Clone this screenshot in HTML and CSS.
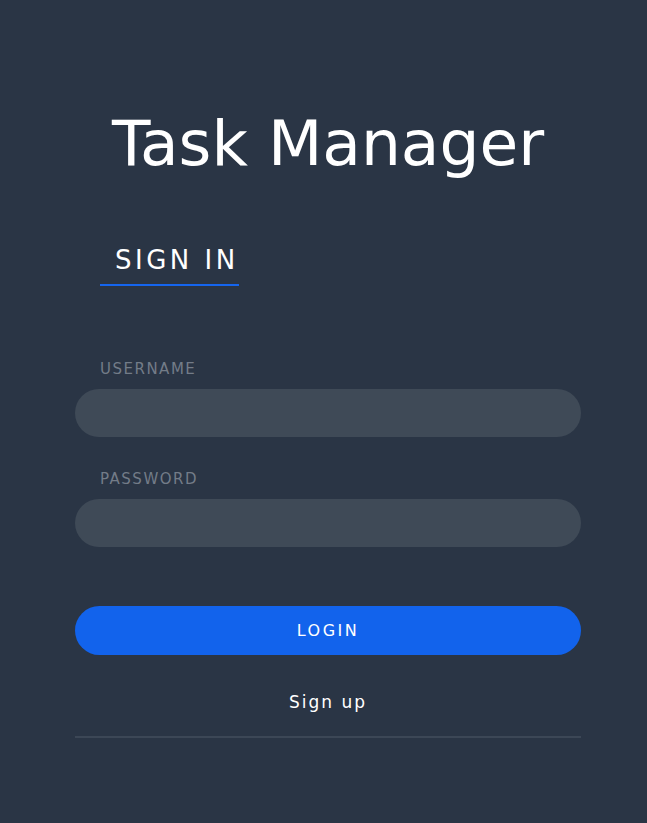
FILE: index.html
```html
<!DOCTYPE html>
<html>
  <head>
    <title>Task Manager</title>
    <link rel="stylesheet" href="styles.css">
  </head>
  <body>
    <div class="login-wrap">
      <h1 class="title">Task Manager</h1>

      <div class="tab-group">
        <div class="tab-link">SIGN IN</div>
      </div>

      <form class="login-form">
        <label class="field-label" for="username">USERNAME</label>
        <input class="field" type="text" id="username" name="username" />

        <label class="field-label" for="password">PASSWORD</label>
        <input class="field" type="password" id="password" name="password" />

        <button type="submit" class="login-btn">LOGIN</button>
      </form>

      <a class="signup-link" href="#">Sign up</a>
      <div class="divider"></div>
    </div>
  </body>
</html>
```

FILE: styles.css
```css
body {
  background-color: #2a3545;
  margin: 0;
  font-family: "DejaVu Sans", sans-serif;
  color: white;
  min-height: 100vh;
}

.login-wrap {
  width: 506px;
  margin-left: 75px;
  padding-top: 104px;
}

.title {
  margin: 0;
  text-align: center;
  font-size: 63px;
  font-weight: normal;
  line-height: 80px;
}

.tab-group {
  margin-top: 60px;
  padding-left: 25px;
}

.tab-link {
  display: inline-block;
  padding: 0 0 8px 15px;
  width: 124px;
  font-size: 26px;
  letter-spacing: 3.5px;
  line-height: 32px;
  border-bottom: 2px solid #1565ee;
}

.login-form {
  display: flex;
  flex-direction: column;
  margin-top: 73px;
}

.field-label {
  padding-left: 25px;
  font-size: 15px;
  letter-spacing: 1.5px;
  color: #737c88;
  line-height: 20px;
  margin-bottom: 10px;
}

.field {
  height: 48px;
  border: none;
  border-radius: 24px;
  background: #3f4a57;
  color: white;
  padding: 0 24px;
  font-family: inherit;
  font-size: 16px;
  margin-bottom: 32px;
  outline: none;
}

.login-btn {
  margin-top: 27px;
  height: 49px;
  border: none;
  border-radius: 25px;
  background: #1263ec;
  color: white;
  font-family: inherit;
  font-size: 16px;
  letter-spacing: 2.5px;
  cursor: pointer;
}

.signup-link {
  display: block;
  margin-top: 35px;
  text-align: center;
  color: white;
  text-decoration: none;
  font-size: 17px;
  letter-spacing: 2px;
  line-height: 24px;
}

.divider {
  margin-top: 22px;
  height: 2px;
  background: #3c4756;
}
```
